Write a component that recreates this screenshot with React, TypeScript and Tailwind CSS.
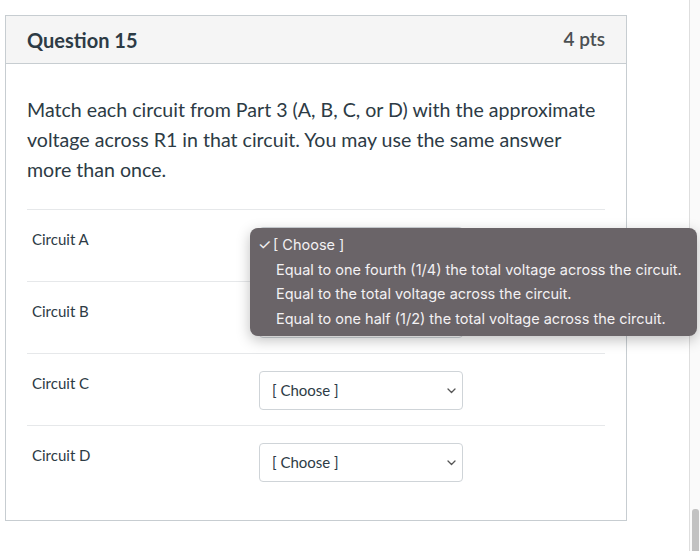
import React from "react";

const FONT = { fontFamily: "Lato, 'Open Sans', sans-serif" };
const POPUP_FONT = { fontFamily: "Inter, 'Noto Sans', sans-serif" };

const CIRCUITS = ["Circuit A", "Circuit B", "Circuit C", "Circuit D"];
const OPTIONS = [
  "Equal to one fourth (1/4) the total voltage across the circuit.",
  "Equal to the total voltage across the circuit.",
  "Equal to one half (1/2) the total voltage across the circuit.",
];

function Chevron() {
  return (
    <svg width="9" height="6" viewBox="0 0 9 6" fill="none" className="text-[#555]">
      <path d="M1 1l3.5 3.5L8 1" stroke="currentColor" strokeWidth="1.3" strokeLinecap="round" strokeLinejoin="round" />
    </svg>
  );
}

function ChooseSelect() {
  return (
    <div className="flex h-[39px] w-[204px] items-center justify-between rounded-[4px] border border-[#cfd4d8] bg-white pl-[12px] pr-[6px] text-[15px] text-[#2d3b45]">
      <span>[ Choose ]</span>
      <Chevron />
    </div>
  );
}

function MatchRow({ label }: { label: string }) {
  return (
    <div className="flex items-start border-t border-[#e6e8ea] pt-[17px] pb-[15px]">
      <div className="w-[232px] pl-[5px] pt-[2px] text-[15px] leading-[20px] text-[#2d3b45]">{label}</div>
      <ChooseSelect />
    </div>
  );
}

function OptionsPopup() {
  return (
    <div
      style={POPUP_FONT}
      className="absolute left-[250px] top-[228px] w-[447px] rounded-[8px] bg-[#6a6468] py-[5px] text-[14.5px] leading-[24.5px] text-[#f3f1f3] shadow-[0_4px_14px_rgba(0,0,0,0.25)]"
    >
      <div className="flex items-center pl-[8px]">
        <span className="w-[15px] text-[15px]">✓</span>
        <span>[ Choose ]</span>
      </div>
      {OPTIONS.map((o) => (
        <div key={o} className="pl-[26px]">
          {o}
        </div>
      ))}
    </div>
  );
}

export default function App() {
  return (
    <div style={FONT} className="relative flex h-[551px] w-[700px] overflow-hidden bg-white">
      <div className="flex-1 pl-[5px] pt-[15px]">
        <div className="w-[622px] border border-[#c7cdd1]">
          <div className="flex h-[48px] items-center justify-between border-b border-[#c7cdd1] bg-[#f5f5f5] px-[21px]">
            <h2 className="text-[20px] font-bold text-[#2d3b45]">Question 15</h2>
            <span className="text-[19px] font-semibold text-[#4b4f52]">4 pts</span>
          </div>
          <div className="px-[21px] pt-[31px] pb-[23px]">
            <p className="text-[19.6px] leading-[30px] text-[#2d3b45]">
              Match each circuit from Part 3 (A, B, C, or D) with the approximate voltage across R1 in that circuit.
              You may use the same answer more than once.
            </p>
            <div className="mt-[24px]">
              {CIRCUITS.map((c) => (
                <MatchRow key={c} label={c} />
              ))}
            </div>
          </div>
        </div>
      </div>
      <div className="flex h-full w-[11px] flex-col justify-end border-l border-[#dedede] bg-[#fafafa] pl-[2px] pr-[1px]">
        <div className="h-[42px] rounded-t-[3px] bg-[#c2c2c2]" />
      </div>
      <OptionsPopup />
    </div>
  );
}
